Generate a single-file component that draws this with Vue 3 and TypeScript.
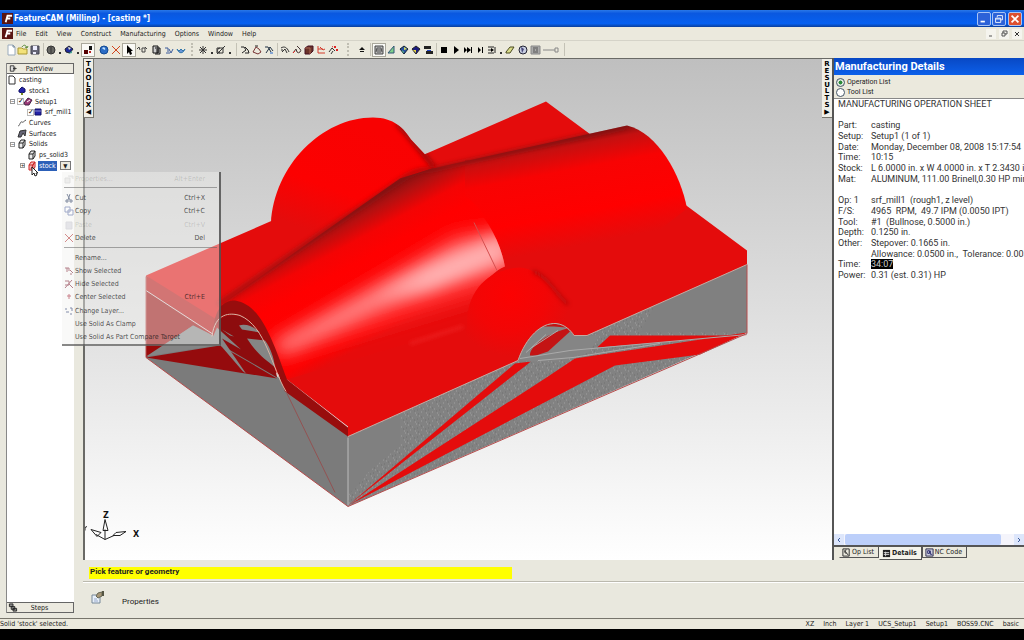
<script setup lang="ts">
import { ref } from 'vue'

type Part = { d: string; f?: string; s?: string }
type Tool = { kind: 'icon' | 'gap' | 'dot'; name?: string; w?: number; mark?: 'line' | 'grip'; on?: boolean; parts?: Part[] }

const icon = (name: string, parts: Part[], on = false, w = 12): Tool => ({ kind: 'icon', name, parts, on, w })
const gap = (w: number, mark?: 'line' | 'grip'): Tool => ({ kind: 'gap', w, mark })
const dot: Tool = { kind: 'dot' }

const tools: Tool[] = [
  icon('New', [{ d: 'M3 1H8L10 3V11H3Z', f: '#fff', s: '#9ab' }, { d: 'M8 1V3H10', s: '#789' }]),
  icon('Open', [{ d: 'M1 4H5L6 5H10V10H1Z', f: '#f3e27a', s: '#a93' }, { d: 'M5 3C7 0 9 1 10 4M8 3L10 4L11 2', s: '#5a8a3a' }]),
  icon('Save', [{ d: 'M2 2H10V10H2Z', f: '#667', s: '#445' }, { d: 'M4 2H8V6H4ZM4 8H7V10H4Z', f: '#eef' }]),
  gap(4, 'line'),
  icon('View', [{ d: 'M6 2A4 4 0 1 1 6 10A4 4 0 1 1 6 2ZM2 6H10M6 2V10M3 4H9M3 8H9', f: '#9a9a92', s: '#333' }]),
  dot,
  icon('Shade', [{ d: 'M2 5L6 2L10 5L7 9L3 8Z', f: '#1c2a9a', s: '#223' }, { d: 'M5 3L8 4L6 6Z', f: '#e8e8d0' }, { d: 'M5 10L9 7V9Z', f: '#4a9' }]),
  dot,
  icon('Simulate colors', [{ d: 'M2 6H6V10H2Z', f: '#500' }, { d: 'M7 2H10V6H7Z', f: '#111' }, { d: 'M7 7H9V9H7Z', f: '#b22' }], true, 14),
  gap(3),
  icon('Refresh', [{ d: 'M6 2A4 4 0 1 1 6 10A4 4 0 1 1 6 2Z', f: '#2b6cc4', s: '#134a94' }, { d: 'M4 4C6 2 8 4 7 6L5 5Z', f: '#bfe0ff' }]),
  icon('Delete', [{ d: 'M2 2L10 10M10 2L2 10', s: '#d2451e' }]),
  icon('Select', [{ d: 'M4 1V10L6 8L7 11L9 10L8 7H10Z', f: '#000' }], true, 14),
  icon('Pick', [{ d: 'M1 5L3 3L4 6M6 4H9V8H6ZM9 3L11 5', s: '#444' }]),
  gap(3),
  icon('Feature', [{ d: 'M2 2H7V9H2ZM4 4H9V10H4M5 6H8M5 8H8', f: '#ccc', s: '#111' }]),
  icon('Feature list', [{ d: 'M2 4H5V8M6 5L8 9L10 5M3 9H7', s: '#3a5a9a' }]),
  icon('Feature group', [{ d: 'M2 5C4 10 8 10 10 5L8 7L6 5L4 7Z', f: '#6b95d8', s: '#37a' }]),
  gap(10, 'grip'),
  icon('Point', [{ d: 'M6 2V10M2 6H10M3 3L9 9M9 3L3 9', s: '#333' }]),
  dot,
  icon('Circle', [{ d: 'M2 4H8V9H2ZM2 10L10 2M5 4A2 2 0 0 0 5 9', s: '#333' }]),
  dot,
  gap(6, 'line'),
  icon('Trim', [{ d: 'M2 3L5 3L7 6L3 9M6 3L9 6L10 9H6', s: '#222' }]),
  icon('Extend', [{ d: 'M2 8L5 3L8 5L10 8L7 10Z', s: '#733' }, { d: 'M4 2H7', s: '#222' }]),
  icon('Join', [{ d: 'M2 3H5L8 8M3 9L7 3L10 7', s: '#234' }, { d: 'M7 9H10', s: '#26c' }]),
  gap(4, 'line'),
  icon('Curve', [{ d: 'M2 4C5 2 8 3 10 8M3 8L6 5L8 9M2 6H4', s: '#333' }]),
  icon('Sketch', [{ d: 'M2 9L5 5L6 8A2 2 0 1 0 9 5L6 2', s: '#433' }, { d: 'M2 9L4 7', s: '#d22' }]),
  icon('Solid', [{ d: 'M2 4L5 2H10V7L7 10H2Z', f: '#6b3329', s: '#412' }, { d: 'M2 4H7V10', s: '#a65' }]),
  icon('Axis', [{ d: 'M3 2V9H10M3 5H8M5 3L8 6L10 5', s: '#d43a2a' }]),
  icon('Pattern', [{ d: 'M2 8L5 4L8 7M4 10L6 7', s: '#333' }, { d: 'M7 2H9V4H7ZM9 5H11V7H9ZM5 2H6V4', f: '#d22' }]),
  gap(17, 'grip'),
  icon('Eject', [{ d: 'M3 6L6 3L9 6ZM4 7H8V8H4Z', f: '#111' }]),
  gap(4, 'line'),
  icon('Centerline', [{ d: 'M2 2H10V10H2Z', f: '#bbb', s: '#444' }, { d: 'M4 4H8M3 6H9M4 8H8M4 4L3 8M8 4L9 8', s: '#555' }], true, 14),
  icon('2D', [{ d: 'M2 9L8 2V9Z', f: '#7fd08a', s: '#357' }]),
  icon('3D', [{ d: 'M2 5L6 2L10 5L6 10Z', f: '#2a50a0', s: '#123' }, { d: 'M6 3L9 5L6 6Z', f: '#d8e060' }, { d: 'M4 6L6 8L5 9Z', f: '#6d8' }]),
  icon('Rapid cut', [{ d: 'M2 5L6 2L10 5L6 10Z', f: '#1a1a80', s: '#222' }, { d: 'M3 6L6 6V9Z', f: '#e8d840' }]),
  icon('Machine', [{ d: 'M2 2H9V5H2ZM4 7H11V10H4Z', f: '#222' }, { d: 'M5 6H9V7H5Z', f: '#24c' }]),
  gap(4, 'line'),
  icon('Stop', [{ d: 'M3 3H9V9H3Z', f: '#000' }]),
  icon('Play', [{ d: 'M4 2L9 6L4 10Z', f: '#000' }]),
  icon('Fast forward', [{ d: 'M2 3L5 6L2 9ZM5 3L9 6L5 9ZM9 3H10V9H9Z', f: '#000' }]),
  icon('Step', [{ d: 'M4 3L7 6L4 9ZM8 3H9V9H8Z', f: '#000' }]),
  icon('Step operation', [{ d: 'M2 3H8M2 9H8M2 6H5M9 3V9', s: '#222' }, { d: 'M5 4L8 6L5 8Z', f: '#000' }]),
  dot,
  icon('Eraser', [{ d: 'M2 8L6 3H10L6 9H2Z', f: '#d9dc8a', s: '#4a4a20' }]),
  gap(1),
  icon('Globe', [{ d: 'M6 2A4 4 0 1 1 6 10A4 4 0 1 1 6 2Z', f: '#c6cde0', s: '#223' }, { d: 'M4 3L7 5L5 9Z', f: '#447' }]),
  gap(1),
  icon('Region', [{ d: 'M1 2H10V10H1Z', f: '#aaa', s: '#888' }, { d: 'M3 4H8M3 6H5M6 6H8M3 8H8', s: '#555' }]),
  icon('Speed', [{ d: 'M1 6H13M13 4H16V8H13Z', s: '#888' }], false, 20),
  gap(4, 'line'),
]

const menus = ['File', 'Edit', 'View', 'Construct', 'Manufacturing', 'Options', 'Window', 'Help']

type Node = { label: string; depth: number; glyph: string; fold?: string; check?: boolean; sel?: boolean }
const tree: Node[] = [
  { label: 'casting', depth: 0, glyph: 'page' },
  { label: 'stock1', depth: 1, glyph: 'stock' },
  { label: 'Setup1', depth: 1, glyph: 'setup', fold: '−', check: true },
  { label: 'srf_mill1', depth: 2, glyph: 'mill', check: true },
  { label: 'Curves', depth: 1, glyph: 'curve' },
  { label: 'Surfaces', depth: 1, glyph: 'surface' },
  { label: 'Solids', depth: 1, glyph: 'solid', fold: '−' },
  { label: 'ps_solid3', depth: 2, glyph: 'solid' },
  { label: 'stock', depth: 2, glyph: 'solidred', fold: '+', sel: true },
]
const glyphs: Record<string, Part[]> = {
  page: [{ d: 'M2 1H6L8 3V9H2Z', f: '#fff', s: '#333' }],
  stock: [{ d: 'M2 4L5 1L8 3V6L5 7L2 6Z', f: '#2323a8', s: '#116' }, { d: 'M4 7H6V9H4Z', f: '#7a8a20' }],
  setup: [{ d: 'M1 6L5 1L9 3L6 8L2 8Z', f: '#9a3a78', s: '#424' }, { d: 'M4 5L7 3', s: '#fff' }],
  mill: [{ d: 'M2 2H8V8H2Z', f: '#2323a8', s: '#116' }, { d: 'M2 4H8', s: '#88c' }],
  curve: [{ d: 'M1 8C3 8 3 3 5 4C6 5 7 3 9 2', s: '#555' }],
  surface: [{ d: 'M1 8L3 2L9 1L8 7L6 4L4 8Z', f: '#667', s: '#333' }],
  solid: [{ d: 'M2 4H6V9H2ZM2 4L4 1H8L6 4M8 1V6L6 9', f: '#eee', s: '#222' }],
  solidred: [{ d: 'M2 4H6V9H2ZM2 4L4 1H8L6 4M8 1V6L6 9', f: '#f3c0c0', s: '#c22' }, { d: 'M4 8L7 2', s: '#c22' }],
}

type Item = { label?: string; key?: string; off?: boolean; parts?: Part[] }
const items: Item[] = [
  { label: 'Properties...', key: 'Alt+Enter', off: true, parts: [{ d: 'M1 4H6V9H1ZM4 2H9V5', f: '#ccc', s: '#999' }] },
  {},
  { label: 'Cut', key: 'Ctrl+X', parts: [{ d: 'M3 1L6 7M6 1L4 7M2 7H4V9H2ZM6 7H8V9H6Z', s: '#346' }] },
  { label: 'Copy', key: 'Ctrl+C', parts: [{ d: 'M1 1H6V6H1ZM4 4H9V9H4Z', f: '#fff', s: '#67a' }] },
  { label: 'Paste', key: 'Ctrl+V', off: true, parts: [{ d: 'M2 2H8V9H2Z', f: '#aab', s: '#889' }] },
  { label: 'Delete', key: 'Del', parts: [{ d: 'M1 1L9 9M9 1L1 9', s: '#b44' }] },
  {},
  { label: 'Rename...' },
  { label: 'Show Selected', parts: [{ d: 'M1 2H5V5M3 2V6M6 4L9 7M6 8H8', s: '#834' }] },
  { label: 'Hide Selected', parts: [{ d: 'M1 2H5V6H1M8 1L1 9M5 5L9 9', s: '#834' }] },
  { label: 'Center Selected', key: 'Ctrl+E', parts: [{ d: 'M5 2V7M3 4H7', s: '#a34' }] },
  { label: 'Change Layer...', parts: [{ d: 'M2 2V4M2 6H5M6 2H8V5M7 7V9', s: '#347' }] },
  { label: 'Use Solid As Clamp' },
  { label: 'Use Solid As Part Compare Target' },
]

const sheet: [string, string][] = [
  ['', ''],
  ['Part:', 'casting'],
  ['Setup:', 'Setup1 (1 of 1)'],
  ['Date:', 'Monday, December 08, 2008 15:17:54'],
  ['Time:', '10:15'],
  ['Stock:', 'L 6.0000 in. x W 4.0000 in. x T 2.3430 in.'],
  ['Mat:', 'ALUMINUM, 111.00 Brinell,0.30 HP min/'],
  ['', ''],
  ['Op: 1', 'srf_mill1  (rough1, z level)'],
  ['F/S:', '4965  RPM,  49.7 IPM (0.0050 IPT)'],
  ['Tool:', '#1  (Bullnose, 0.5000 in.)'],
  ['Depth:', '0.1250 in.'],
  ['Other:', 'Stepover: 0.1665 in.'],
  ['', 'Allowance: 0.0500 in.,  Tolerance: 0.0050'],
  ['Time:', '34:07'],
  ['Power:', '0.31 (est. 0.31) HP'],
]

const list = ref('op')
const states = ['XZ', 'Inch', 'Layer 1', 'UCS_Setup1', 'Setup1', 'BOSS9.CNC', 'basic']
</script>

<template>
  <div class="screen">
    <header class="title">
      <svg class="logo" viewBox="0 0 12 12"><rect width="12" height="12" fill="#5a1512" /><path d="M4 10L6 3H11M5 6H9" stroke="#fff" stroke-width="2" fill="none" /></svg>
      <h1>FeatureCAM (Milling) - [casting *]</h1>
      <button class="win" aria-label="Minimize"><svg viewBox="0 0 14 14"><path d="M3 10H8" stroke="#fff" stroke-width="2" /></svg></button>
      <button class="win" aria-label="Restore"><svg viewBox="0 0 14 14"><path d="M5 5V3H11V8H9M3 6H9V11H3ZM3 7H9" stroke="#fff" fill="none" /></svg></button>
      <button class="win close" aria-label="Close"><svg viewBox="0 0 14 14"><path d="M3 3L11 11M11 3L3 11" stroke="#fff" stroke-width="2" /></svg></button>
    </header>

    <nav class="menubar">
      <svg class="logo" viewBox="0 0 12 12"><rect width="12" height="12" fill="#5a1512" /><path d="M4 10L6 3H11M5 6H9" stroke="#fff" stroke-width="2" fill="none" /></svg>
      <button v-for="m in menus" :key="m">{{ m }}</button>
      <span class="mdi">
        <button aria-label="Minimize document"><svg viewBox="0 0 10 10"><path d="M3 7H6" stroke="#555" /></svg></button>
        <button aria-label="Restore document"><svg viewBox="0 0 10 10"><path d="M4 4V2H8V5H6M3 4H6V7H3Z" stroke="#555" fill="none" /></svg></button>
        <button aria-label="Close document"><svg viewBox="0 0 10 10"><path d="M3 3L7 7M7 3L3 7" stroke="#333" /></svg></button>
      </span>
    </nav>

    <div class="toolbar" role="toolbar">
      <template v-for="(t, i) in tools" :key="i">
        <button v-if="t.kind === 'icon'" class="tool" :class="{ on: t.on }" :aria-label="t.name" :style="{ width: t.w + 'px' }">
          <svg :viewBox="t.w === 20 ? '0 0 20 12' : '0 0 12 12'" :class="{ wide: t.w === 20 }">
            <path v-for="(p, j) in t.parts" :key="j" :d="p.d" :fill="p.f || 'none'" :stroke="p.s || 'none'" />
          </svg>
        </button>
        <span v-else-if="t.kind === 'dot'" class="more"></span>
        <span v-else class="gap" :class="t.mark" :style="{ width: t.w + 'px' }"></span>
      </template>
    </div>

    <main class="body">
      <aside class="side">
        <button class="sidehead">
          <svg viewBox="0 0 10 10"><path d="M2 2H6V8H2ZM5 5H9M7 3V7" fill="#ddd" stroke="#333" /></svg><span>PartView</span>
        </button>
        <ul class="tree">
          <li v-for="n in tree" :key="n.label" :class="'d' + n.depth">
            <span class="fold"><i v-if="n.fold">{{ n.fold }}</i></span>
            <input v-if="n.check" type="checkbox" checked :aria-label="n.label" />
            <svg viewBox="0 0 10 10"><path v-for="(p, j) in glyphs[n.glyph]" :key="j" :d="p.d" :fill="p.f || 'none'" :stroke="p.s || 'none'" /></svg>
            <span class="name" :class="{ sel: n.sel }">{{ n.label }}</span>
            <button v-if="n.sel" class="drop" aria-label="stock options">▼</button>
          </li>
        </ul>
        <button class="sidehead">
          <svg viewBox="0 0 10 10"><path d="M1 1H5V4H1ZM3 4H7V7H3ZM5 6H9V9H5Z" fill="#888" stroke="#222" /></svg><span>Steps</span>
        </button>
      </aside>

      <section class="work">
        <div class="upper">
          <div class="canvas">
            <svg class="scene" viewBox="85 58 747 502" preserveAspectRatio="xMidYMid slice" role="img" aria-label="Casting model">
              <defs>
                <linearGradient id="sky" x1="0" y1="0" x2="0" y2="1"><stop offset="0" stop-color="#bfbfbf" /><stop offset=".5" stop-color="#dedede" /><stop offset="1" stop-color="#fff" /></linearGradient>
                <linearGradient id="cone" gradientUnits="userSpaceOnUse" x1="350" y1="209" x2="410" y2="320">
                  <stop offset="0" stop-color="#8c1212" /><stop offset=".09" stop-color="#b41010" /><stop offset=".24" stop-color="#f40404" /><stop offset=".4" stop-color="#f00" /><stop offset=".9" stop-color="#fc0202" /><stop offset="1" stop-color="#e60b0b" />
                </linearGradient>
                <linearGradient id="barrel" gradientUnits="userSpaceOnUse" x1="520" y1="146" x2="540" y2="252">
                  <stop offset="0" stop-color="#8c1010" /><stop offset=".08" stop-color="#c41010" /><stop offset=".3" stop-color="#f80303" /><stop offset=".7" stop-color="#f00" /><stop offset="1" stop-color="#e40c0c" />
                </linearGradient>
                <linearGradient id="boss" gradientUnits="userSpaceOnUse" x1="350" y1="120" x2="310" y2="230"><stop offset="0" stop-color="#f80202" /><stop offset=".6" stop-color="#fc0101" /><stop offset="1" stop-color="#e40c0c" /></linearGradient>
                <radialGradient id="bump" gradientUnits="userSpaceOnUse" cx="510" cy="295" r="60"><stop offset="0" stop-color="#fc0202" /><stop offset=".6" stop-color="#f20606" /><stop offset="1" stop-color="#e40c0c" /></radialGradient>
                <filter id="soft" x="-30%" y="-30%" width="160%" height="160%"><feGaussianBlur stdDeviation="9" /></filter>
                <filter id="edge" x="-30%" y="-30%" width="160%" height="160%"><feGaussianBlur stdDeviation="2" /></filter>
                <clipPath id="conearea"><path d="M222 303L404 172L468 200C486 215 500 240 505 266C484 275 472 300 468 325L287 379Z" /></clipPath>
                <clipPath id="solidarea">
                  <path d="M146 275L546 101L747 250V264L587 335H570L518 360L348 436V426L287 379L215 333Z" />
                  <path d="M271 223C274 165 322 117 373 117C394 117 404 128 411 139L440 170L400 182L300 250L255 250Z" />
                  <path d="M400 178L432 168L627 125C658 132 681 175 687 208L640 245L560 300L470 325L420 300Z" />
                </clipPath>
                <pattern id="grain" width="11" height="9" patternUnits="userSpaceOnUse">
                  <rect width="11" height="9" fill="#828282" />
                  <path d="M1 1h1v1h-1zM5 3h1v1h-1zM9 0h1v1h-1zM3 6h1v1h-1zM8 7h1v1h-1z" fill="#a0a0a0" /><path d="M3 2h1v1h-1zM7 5h1v1h-1zM0 8h1v1h-1zM10 4h1v1h-1z" fill="#707070" />
                </pattern>
              </defs>
              <rect x="-400" y="58" width="1800" height="502" fill="url(#sky)" />
              <!-- stock block faces -->
              <path d="M146 276L348 430V506L146 357Z" fill="#7b7b7b" />
              <path d="M348 430L747 258V332L348 506Z" fill="url(#grain)" />
              <path d="M660 296L747 262V332H640Z" fill="#808080" />
              <path d="M348 437L400 414V445L370 470L348 495Z" fill="#808080" />
              <!-- plate -->
              <path d="M146 275L546 101L747 250V264L587 335H570L518 360L348 436V426L287 379L215 333Z" fill="#e40c0c" />
              <path d="M146 275L215 318L222 303V340L212 335L146 290Z" fill="#b81010" />
              <path d="M146 290L146 357L193 325L213 335Z" fill="#9a0b0b" />
              <path d="M146 357L220 345L277 378Z" fill="#950b0d" />
              <path d="M193 325L213 335L222 344L146 356Z" fill="#858585" />
              <path d="M146 290L212 333" stroke="#d8c8c8" />
              <!-- rear boss -->
              <path d="M271 223C274 165 322 117 373 117C394 117 404 128 411 139L440 170L400 182L300 250L255 250Z" fill="url(#boss)" />
              <g clip-path="url(#solidarea)"><path d="M397 123C403 128 409 136 434 167" stroke="#801010" stroke-width="5" fill="none" opacity=".75" filter="url(#edge)" /></g>
              <!-- barrel and cone -->
              <path d="M400 178L432 168L627 125C658 132 681 175 687 208L640 245L560 300L470 325L420 300Z" fill="url(#barrel)" />
              <path d="M222 303L400 178L432 168L505 160L505 266L468 325L287 379Z" fill="url(#cone)" />
              <path d="M465 160H560L580 270H505C500 235 485 210 465 195Z" fill="url(#barrel)" />
              <g clip-path="url(#conearea)">
                <path d="M268 342L455 232L515 225L515 285L275 358Z" fill="#ff2828" filter="url(#soft)" />
                <path d="M275 344L455 246L515 228L515 262L400 298L285 352Z" fill="#ff9494" filter="url(#soft)" />
                <path d="M375 300L430 270L500 242L505 252L430 286Z" fill="#ffc4c4" filter="url(#soft)" />
              </g>
              <g clip-path="url(#solidarea)"><path d="M218 304L320 234L400 180Q415 168 432 169L500 154L627 126" stroke="#7c1414" stroke-width="4" fill="none" opacity=".6" filter="url(#edge)" /></g>
              <path d="M474 222L497 270" stroke="#d65050" fill="none" />
              <!-- front boss -->
              <path d="M467 326C466 292 486 269 520 267C541 268 558 296 590 325L575 336L520 358L460 350Z" fill="url(#bump)" />
              <path d="M533 271C548 276 556 294 568 304" stroke="#981010" stroke-width="3" fill="none" opacity=".7" filter="url(#edge)" />
              <path d="M410 343L463 326" stroke="#ff4848" stroke-width="1" filter="url(#edge)" />
              <!-- end arch -->
              <path d="M213 333C214 310 222 300 235 300C260 304 271 335 287 379L348 427V436L285 391C276 370 270 344 257 328C242 310 224 312 217 323L212 337Z" fill="#980d0d" />
              <path d="M217 323C224 312 242 310 257 328C270 344 276 370 277 377L222 345Z" fill="#8d0c0e" />
              <path d="M239 325C247 322 256 328 260 332L242 329ZM247 338L265 340C271 348 274 358 275 367C265 358 258 355 247 338ZM217 327L241 349L222 338L246 373L243 371L213 336ZM222 329L234 336L230 335Z" fill="#858585" />
              <path d="M212 336C215 312 230 312 240 315C266 326 272 368 286 391" stroke="#d9b4a4" fill="none" />
              <path d="M286 391L335 492" stroke="#935252" fill="none" />
              <!-- side triangles -->
              <g fill="#e40c0c">
                <path d="M348 505L515 363L531 361Z" />
                <path d="M350 504L545 378L575 358L747 332L700 354L615 365Z" />
                <path d="M597 347L610 335H747Z" />
              </g>
              <path d="M518 360C526 337 541 322 556 323C565 324 571 330 574 335L587 336L600 334L589 352L560 360L530 361Z" fill="#858585" />
              <path d="M530 355C529 347 545 334 567 328L570 331L548 351L536 355Z" fill="#c41414" />
              <path d="M543 326C550 322 562 323 566 327L554 326Z" fill="#c41414" />
              <path d="M532 347L558 330M520 358L570 350L747 334M538 360L573 357L660 343M526 352L546 334" stroke="#aaa" fill="none" />
              <path d="M518 360C526 337 541 322 556 323C565 324 571 330 574 335L587 335L747 264M348 436L518 360" stroke="#c4aaa2" fill="none" />
              <path d="M348 437V505" stroke="#bcbcbc" />
              <path d="M146 276V357L348 506L747 333V264" stroke="#b64c4c" fill="none" />
              <!-- axes -->
              <g stroke="#222" fill="none">
                <path d="M105 539V529M103 530L105 519L108 530ZM105 539L96 534M91 529L101 532L97 536ZM105 539L114 535M113 535L116 532L126 531L120 535Z" />
                <path d="M85 530V527L87 526" />
              </g>
              <text x="103" y="517" class="axis">Z</text><text x="133" y="536" class="axis">X</text>
            </svg>
            <button class="vtab left"><span v-for="(c, i) in 'TOOLBOX◀'" :key="i">{{ c }}</span></button>
            <button class="vtab right"><span v-for="(c, i) in 'RESULTS▶'" :key="i">{{ c }}</span></button>
          </div>

          <aside class="details">
            <h2>Manufacturing Details</h2>
            <div class="radios">
              <label><input v-model="list" type="radio" name="list" value="op" />Operation List</label>
              <label><input v-model="list" type="radio" name="list" value="tool" />Tool List</label>
            </div>
            <div class="sheet">
              <div class="lines">
                <p>MANUFACTURING OPERATION SHEET</p>
                <p v-for="(r, i) in sheet" :key="i"><span class="key">{{ r[0] }}</span><span :class="{ inv: r[1] === '34:07' }">{{ r[1] }}</span></p>
              </div>
            </div>
            <div class="scroll">
              <button aria-label="Scroll left"><svg viewBox="0 0 10 10"><path d="M6 3L4 5L6 7" stroke="#3a5a9a" fill="none" /></svg></button>
              <span class="thumb"></span>
              <button aria-label="Scroll right"><svg viewBox="0 0 10 10"><path d="M4 3L6 5L4 7" stroke="#3a5a9a" fill="none" /></svg></button>
            </div>
            <div class="tabs">
              <button><svg viewBox="0 0 10 10"><path d="M1 1H8V9H1ZM3 3L7 8M5 2A2 2 0 1 0 5 6" stroke="#222" fill="none" /></svg>Op List</button>
              <button class="cur"><svg viewBox="0 0 10 10"><path d="M1 1H9V9H1Z" fill="#222" /><path d="M2 4H8M2 6H8M4 3V8" stroke="#ddd" /></svg>Details</button>
              <button><svg viewBox="0 0 10 10"><path d="M1 1H9V9H1Z" fill="#ccd" stroke="#224" /><path d="M3 3H5V6H3ZM6 3V7H8" stroke="#226" fill="none" /></svg>NC Code</button>
            </div>
          </aside>
        </div>
        <div class="prompt"><span>Pick feature or geometry</span></div>
        <div class="props">
          <svg viewBox="0 0 14 14"><path d="M1 5H9V13H1Z" fill="#e8f0fa" stroke="#789" /><path d="M5 6L7 3L11 2V6L7 8Z" fill="#a89878" stroke="#665" /><path d="M11 1H13V6H11Z" fill="#554" /><path d="M3 9H6M3 11H7" stroke="#9ac" /></svg>
          <button>Properties</button>
        </div>
      </section>

      <div class="popup" role="menu">
        <template v-for="(it, i) in items" :key="i">
          <button v-if="it.label" role="menuitem" :disabled="it.off">
            <svg viewBox="0 0 10 10"><path v-for="(p, j) in it.parts" :key="j" :d="p.d" :fill="p.f || 'none'" :stroke="p.s || 'none'" /></svg>
            <span>{{ it.label }}</span><kbd>{{ it.key }}</kbd>
          </button>
          <hr v-else />
        </template>
      </div>
      <svg class="pointer" viewBox="0 0 8 11"><path d="M1 1V9L3 7L4 10L6 9L5 7H7Z" fill="#fff" stroke="#222" /></svg>
    </main>

    <footer class="status"><span class="msg">Solid 'stock' selected.</span><span v-for="s in states" :key="s">{{ s }}</span></footer>
  </div>
</template>

<style>
html, body { margin: 0; background: #000; }
</style>

<style scoped>
* { box-sizing: border-box; }
button { font: inherit; color: inherit; background: none; border: 0; padding: 0; margin: 0; display: flex; align-items: center; }
svg { display: block; flex: none; }
.screen { height: 100vh; padding: 10px 0 11px; background: #000; display: flex; flex-direction: column; overflow: hidden; font: 7px/10px "DejaVu Sans Condensed", "DejaVu Sans", sans-serif; color: #222; }
.title { height: 17px; flex: none; display: flex; align-items: center; gap: 1px; padding: 0 2px; background: linear-gradient(#2a78e8, #0a58e0 20%, #0660f0 80%, #0a3f9c); }
.logo { width: 11px; height: 11px; }
.title h1 { flex: 1; margin: 0; font: bold 8px/14px "DejaVu Sans Condensed", "DejaVu Sans", sans-serif; color: #fff; }
.win { width: 14px; height: 14px; border: 1px solid #a8c4f4; border-radius: 2px; background: #2c62d8; }
.win svg { width: 12px; height: 12px; }
.close { background: #dc5030; margin-left: 1px; }
.menubar { height: 14px; flex: none; display: flex; align-items: center; gap: 9px; padding: 0 2px; background: #ebe9dd; border-bottom: 1px solid #d5d3c8; font-size: 7px; }
.menubar .logo { margin-right: -6px; }
.mdi { margin-left: auto; display: flex; gap: 3px; }
.mdi button { width: 10px; height: 10px; background: #f5f4ee; }
.mdi svg { width: 10px; height: 10px; }
.toolbar { height: 17px; flex: none; display: flex; align-items: center; padding-left: 5px; background: #ebe9dd; overflow: hidden; }
.tool { height: 14px; flex: none; justify-content: center; }
.tool.on { background: #fafaf6; border: 1px solid #aaa89c; }
.tool svg { width: 12px; height: 12px; }
.tool svg.wide { width: 20px; }
.more { width: 6px; height: 12px; flex: none; display: flex; align-items: flex-end; justify-content: center; }
.more::after { content: ""; width: 2px; height: 2px; background: #333; margin-bottom: 2px; }
.gap { height: 13px; flex: none; display: flex; justify-content: center; }
.gap.line::after { content: ""; width: 1px; background: #c4c2b6; }
.gap.grip::after { content: ""; width: 0; border-left: 2px dotted #c0beb2; }
.body { flex: 1; min-height: 0; display: flex; position: relative; background: #e9e8de; }
.side { width: 68px; flex: none; margin: 5px 9px 5px 6px; display: flex; flex-direction: column; border-left: 1px solid #888; }
.sidehead { height: 11px; flex: none; border: 1px solid #666; border-left: 0; background: #eceae0; }
.sidehead svg { width: 10px; height: 9px; margin-left: 1px; }
.sidehead span { flex: 1; text-align: center; padding-right: 12px; }
.tree { flex: 1; margin: 0; padding: 1px 0 0; list-style: none; background: #fff; font-size: 7px; }
.tree li { height: 11px; display: flex; align-items: center; }
.tree li:nth-child(3n + 1) { height: 10px; }
.tree svg { width: 10px; height: 10px; }
.tree .name { margin-left: 1px; padding: 0 1px; white-space: nowrap; }
.name.sel { background: #2c60b8; color: #fff; }
.fold { width: 8px; flex: none; display: flex; justify-content: flex-end; }
.fold i { width: 5px; height: 5px; border: 1px solid #999; font: 6px/3px "Liberation Sans", sans-serif; text-align: center; }
.d0 .fold { width: 0; }
.d1 svg { margin-left: 2px; }
.d1 input + svg, .d2 input + svg { margin-left: -1px; }
.d2 .fold { width: 18px; }
.d2 svg { margin-left: 2px; }
.tree input { appearance: none; width: 7px; height: 7px; margin: 0 0 0 2px; border: 1px solid #bbb; background: #fff; flex: none; }
.tree input:checked::after { content: "✓"; display: block; font: bold 7px/5px "DejaVu Sans", sans-serif; color: #000; }
.drop { width: 11px; height: 9px; margin-left: 3px; justify-content: center; border: 1px solid #777; background: #eceae0; font-size: 6px; }
.work { flex: 1; min-width: 0; display: flex; flex-direction: column; }
.upper { flex: 1; min-height: 0; display: flex; }
.canvas { flex: 1; min-width: 0; position: relative; border: solid #6a6a66; border-width: 1px 0 0 2px; }
.scene { position: absolute; width: 100%; height: 100%; }
.axis { font: bold 8px "DejaVu Sans", sans-serif; fill: #111; }
.vtab { position: absolute; top: 0; width: 10px; height: 59px; padding: 2px 0; flex-direction: column; justify-content: space-between; background: #f0efe8; border: solid #77756c; border-width: 0 1px 1px 0; font: bold 7px/7px "DejaVu Sans", sans-serif; color: #000; }
.vtab span { height: 6px; line-height: 6px; }
.vtab.left { left: -1px; }
.vtab.right { right: 0; border-right: 0; }
.details { width: 192px; flex: none; display: flex; flex-direction: column; border-left: 2px solid #555; background: #ebe9dd; overflow: hidden; }
.details h2 { height: 17px; flex: none; margin: 0; padding-left: 1px; background: linear-gradient(#0848c4, #0c60ea); color: #fff; font: bold 11px/17px Roboto, "Liberation Sans", sans-serif; }
.radios { padding: 2px 2px 0; height: 23px; flex: none; font: 7px/10px Roboto, sans-serif; }
.radios label { display: flex; align-items: center; gap: 2px; height: 10px; }
.radios input { appearance: none; width: 9px; height: 9px; margin: 0; border: 1px solid #456; border-radius: 50%; background: #fff; }
.radios input:checked { background: radial-gradient(#2a8a3a 35%, #dfe8df 45%); }
.sheet { flex: 1; min-height: 0; border-top: 1px solid #888; background: #fff; overflow: hidden; }
.lines { height: 181px; display: flex; flex-direction: column; justify-content: space-between; padding-left: 4px; font: 9px/10px Roboto, "Liberation Sans", sans-serif; color: #333; }
.lines p { margin: 0; min-height: 10px; display: flex; white-space: pre; }
.key { width: 33px; flex: none; }
.inv { background: #000; color: #ccc; }
.scroll { height: 11px; flex: none; display: flex; background: #f4f4fb; }
.scroll button { width: 10px; background: #dde6fb; }
.scroll button:last-child { margin-left: auto; }
.scroll svg { width: 10px; height: 10px; }
.thumb { width: 82%; margin-left: 1px; background: #bccffa; border-radius: 2px; }
.tabs { height: 15px; flex: none; display: flex; align-items: flex-start; padding-left: 5px; border-top: 2px solid #555; font: 7px/10px "DejaVu Sans Condensed", "DejaVu Sans", sans-serif; }
.tabs button { height: 11px; padding: 0 4px 0 2px; gap: 1px; border: solid #555; border-width: 0 1px 1px; }
.tabs button:first-child { border-left-color: transparent; }
.tabs .cur { height: 13px; font-weight: bold; background: #f4f3ea; border-left-color: transparent; }
.tabs svg { width: 9px; height: 9px; }
.prompt { height: 22px; flex: none; padding: 7px 0 2px 6px; border-bottom: 1px solid #bbb9ae; }
.prompt span { display: block; width: 57%; max-width: 423px; height: 12px; padding-left: 1px; background: #ff0; color: #222; font: bold 8px/9px Roboto, "Liberation Sans", sans-serif; }
.props { height: 36px; flex: none; display: flex; align-items: center; gap: 17px; padding: 2px 0 0 8px; font: 8px/10px Roboto, sans-serif; border-top: 1px solid #fff; }
.props svg { width: 14px; height: 14px; margin-bottom: 9px; }
.popup { position: absolute; left: 62px; top: 114px; width: 159px; height: 174px; padding: 0 2px; display: flex; flex-direction: column; justify-content: space-between; background: rgba(242, 242, 240, .45); border-right: 2px solid rgba(60, 60, 60, .75); border-bottom: 2px solid rgba(60, 60, 60, .6); font-size: 7px; color: rgba(20, 20, 20, .75); }
.popup button { height: 13px; gap: 1px; text-align: left; }
.popup button svg { width: 10px; height: 10px; opacity: .6; }
.popup button span { flex: 1; white-space: nowrap; }
.popup button:disabled { color: rgba(80, 80, 80, .22); }
.popup button:disabled svg { opacity: .25; }
.popup kbd { font: inherit; margin-right: 12px; }
.popup hr { width: 100%; height: 1px; margin: 2px 0 3px; border: 0; background: rgba(90, 90, 90, .5); }
.pointer { position: absolute; left: 31px; top: 108px; width: 8px; height: 11px; }
.status { height: 11px; flex: none; display: flex; align-items: center; gap: 9px; padding: 0 5px 0 0; background: #ebe9dd; border-top: 1px solid #77756c; font-size: 7px; line-height: 9px; }
.msg { margin-right: auto; }
</style>
